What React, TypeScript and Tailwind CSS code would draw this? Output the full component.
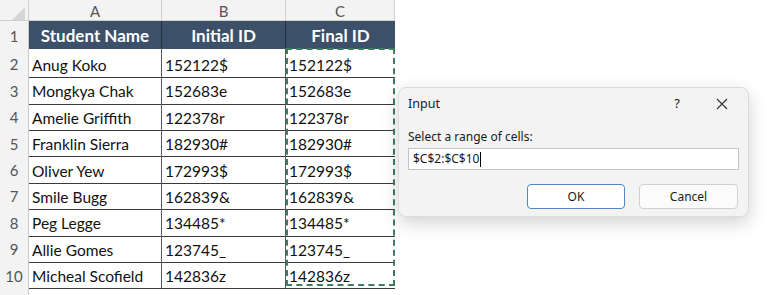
import type { ReactNode } from "react";

const rows: [string, string][] = [
  ["Anug Koko", "152122$"],
  ["Mongkya Chak", "152683e"],
  ["Amelie Griffith", "122378r"],
  ["Franklin Sierra", "182930#"],
  ["Oliver Yew", "172993$"],
  ["Smile Bugg", "162839&"],
  ["Peg Legge", "134485*"],
  ["Allie Gomes", "123745_"],
  ["Micheal Scofield", "142836z"],
];

function RowHead({ children }: { children?: ReactNode }) {
  return (
    <div className="flex w-[29px] items-center justify-center border-r border-[#c9c9c9] bg-[#f3f3f3] pt-[3px] text-[15px] text-[#555]">
      {children}
    </div>
  );
}

function Cell({ children, last }: { children: ReactNode; last?: boolean }) {
  return (
    <div
      className={`flex items-center pl-[3px] pt-[6px] text-[15.5px] text-[#111] ${
        last ? "" : "border-r-[1.5px] border-[#5a5a5a]"
      }`}
    >
      {children}
    </div>
  );
}

function Sheet() {
  return (
    <div className="w-[395px] font-['Lato',sans-serif]">
      {/* column letters */}
      <div className="grid h-[21px] grid-cols-[29px_133px_124px_109px] border-b border-[#d0d0d0] bg-[#f3f3f3] text-[15px] text-[#555]">
        <div className="relative border-r border-[#d0d0d0]">
          <div className="absolute bottom-[3px] right-[3px] h-0 w-0 border-b-[13px] border-l-[13px] border-b-[#d6d6d6] border-l-transparent" />
        </div>
        <div className="flex items-center justify-center border-r border-[#d0d0d0]">A</div>
        <div className="flex items-center justify-center border-r border-[#d0d0d0]">B</div>
        <div className="flex items-center justify-center border-r border-[#d0d0d0]">C</div>
      </div>

      {/* title row */}
      <div className="grid h-[27px] grid-cols-[29px_133px_124px_109px]">
        <RowHead>1</RowHead>
        <div className="flex items-center justify-center border-r border-[#24303f] bg-[#3d5069] pt-[2px] text-[17px] font-bold text-white">
          Student Name
        </div>
        <div className="flex items-center justify-center border-r border-[#24303f] bg-[#3d5069] pt-[2px] text-[17px] font-bold text-white">
          Initial ID
        </div>
        <div className="flex items-center justify-center bg-[#3d5069] pt-[2px] text-[17px] font-bold text-white">
          Final ID
        </div>
      </div>

      <div className="relative">
        {rows.map(([name, id], i) => (
          <div
            key={name}
            className="grid h-[26.4px] grid-cols-[29px_133px_124px_109px]"
          >
            <RowHead>{i + 2}</RowHead>
            <div className="col-span-3 grid grid-cols-[133px_124px_109px] border-b border-[#3a3a3a]">
              <Cell>{name}</Cell>
              <Cell>{id}</Cell>
              <Cell last>{id}</Cell>
            </div>
          </div>
        ))}
        <div className="pointer-events-none absolute left-[286px] top-0 h-full w-[109px] border-2 border-dashed border-[#3b7d5e]" />
      </div>

      <div className="flex h-[12px]">
        <RowHead />
      </div>
    </div>
  );
}

function Dialog() {
  return (
    <div className="absolute left-[398px] top-[87px] h-[130px] w-[351px] rounded-[8px] border border-[#dcdcdc] bg-[#f3f3f3] font-['Noto_Sans',sans-serif] text-[12px] text-[#1a1a1a] shadow-[0_6px_18px_rgba(0,0,0,0.18)]">
      <div className="flex h-[32px] items-center pl-[9px] pr-[20px]">
        <span className="text-[12.5px]">Input</span>
        <span className="ml-auto mr-[36px] text-[13px]">?</span>
        <svg width="12" height="12" viewBox="0 0 12 12" className="text-[#333]">
          <path d="M1 1 L11 11 M11 1 L1 11" stroke="currentColor" strokeWidth="1.1" />
        </svg>
      </div>
      <div className="px-[9px] pt-[9px]">
        <div className="leading-[16px]">Select a range of cells:</div>
        <div className="mt-[3px] flex h-[22px] items-center border border-[#c4c4c4] bg-white pl-[4px]">
          <span>$C$2:$C$10</span>
          <span className="ml-px h-[15px] w-px bg-black" />
        </div>
        <div className="mt-[14px] flex justify-end gap-[14px] pr-px">
          <button className="h-[25px] w-[98px] rounded-[4px] border border-[#4f86c6] bg-white text-[12px]">
            OK
          </button>
          <button className="h-[25px] w-[99px] rounded-[4px] border border-[#d0d0d0] bg-[#fbfbfb] text-[12px]">
            Cancel
          </button>
        </div>
      </div>
    </div>
  );
}

export default function App() {
  return (
    <div className="relative h-[295px] w-[768px] overflow-hidden bg-white">
      <Sheet />
      <Dialog />
    </div>
  );
}
